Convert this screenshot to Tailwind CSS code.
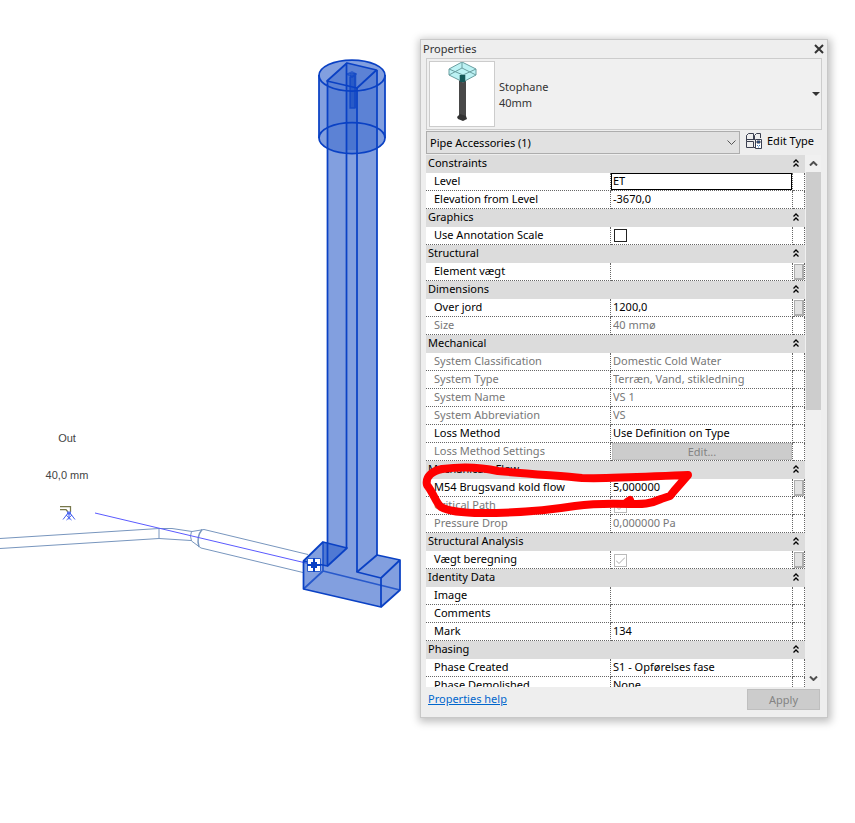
<!DOCTYPE html>
<html lang="en">
<head>
    <meta charset="UTF-8">
    <meta name="viewport" content="width=device-width, initial-scale=1.0">
    <title>Properties</title>
    <script src="https://cdn.jsdelivr.net/npm/@tailwindcss/browser@4"></script>
</head>
<body class="bg-white font-['Noto_Sans',sans-serif] text-[11px] leading-4 text-black">
<main class="flex min-h-screen items-start overflow-hidden">

    <!-- 3D view -->
    <svg class="h-[640px] w-[420px] shrink-0" viewBox="0 0 420 640" fill="none" role="img" aria-label="3D view of pipe accessory">
        <g font-family="Liberation Sans, sans-serif" font-size="11" fill="#444" text-anchor="middle">
            <text x="67" y="442">Out</text>
            <text x="67" y="479">40,0 mm</text>
        </g>

        <!-- Tap symbol -->
        <path d="M60 506.500H70.500V512M60 509.500H66L68 512" stroke="#77774a" stroke-width="1.250"/>
        <path d="M67 511.500h4v3h-4z" fill="#5b74f0"/>
        <path d="M68 513L63 519.500M70 513L75 519.500M69 513V519.500M72 515L66.500 520M66 515L71.500 520" stroke="#4560f0"/>

        <!-- Pipes -->
        <g stroke="#7896be">
            <path d="M0 538.500L159 528.500L172 528.500L192 531.500M0 548.500L159 538.500L191 540.500M159 528V538" />
            <path d="M191.500 531.500Q189.500 536 191.500 541M191.500 541L201 548L303 572.500M192 531.500L204 529.500L308 554.500"/>
            <path d="M202 529.500Q196 537 199 547" stroke-width="1.500"/>
        </g>
        <path d="M95 513L308 563.500" stroke="#5a5aff"/>

        <!-- Column and base -->
        <g fill="#0540c0">
            <path d="M327 154V81L347 63L377 70V555L400 560V590L381 607L303 589V561L323 542L327 543Z" fill-opacity=".5"/>
            <path d="M319 75A33 15 0 0 1 385 75V138A33 15 0 0 1 377 148V70L347 63L327 81V148A33 15 0 0 1 319 138Z" fill-opacity=".5"/>
            <path d="M327 81L347 63L377 70V148A33 15 0 0 1 327 148Z" fill-opacity=".3"/>
            <path d="M323 542L347 548L327 566L323 565Z" fill-opacity=".4"/>
            <path d="M350 73H356V108H350Z" fill-opacity=".5"/>
            <path d="M347 73H357V150H347Z" fill-opacity=".2"/>
        </g>
        <g stroke="#0a41c4" stroke-width="1.750" stroke-linejoin="round">
            <ellipse cx="352" cy="75.500" rx="33" ry="15.500"/>
            <ellipse cx="352" cy="138" rx="33" ry="15.500"/>
            <path d="M319 75V138M385 75V138"/>
            <path d="M347 63L376.500 70L357 88L327 81Z"/>
            <path d="M327.500 81V565M346.500 63V548M357 88V572M377 70V555"/>
            <path d="M347.500 74L352 72L356 74L352 77ZM350 77V108H355V75" stroke-opacity=".6"/>
            <path d="M303.500 561L323 542L347 548L327.500 566L303.500 561V589L381 607V578L357 572L377 555L400 560L381 578M400 560V590L381 607"/>
            <path d="M323 542V571L303.500 589M323 571L400 590" stroke-opacity=".75"/>
        </g>
        <path d="M307.500 558.500H320.500V571.500H307.500Z" fill="#fff" stroke="#2a5ccc"/>
        <path d="M314 558V572M307 565H321" stroke="#0a41c4" stroke-width="2"/>
        <path d="M311 562H317V568H311Z" fill="#0a41c4"/>
    </svg>

    <!-- Properties palette -->
    <aside class="relative mt-[39px] mr-[27px] min-w-0 flex-1 border border-[#c8c8c8] bg-[#eee] shadow-[1px_2px_8px_2px_rgba(0,0,0,0.25)]">
        <header class="flex h-[18px] items-center justify-between pr-[3px] pl-0.5">
            <h1 class="text-[#333]">Properties</h1>
            <button type="button" aria-label="Close">
                <svg class="size-[10px]" viewBox="0 0 10 10" stroke="#333" stroke-width="2"><path d="M1 1L9 9M9 1L1 9"/></svg>
            </button>
        </header>

        <div class="px-[5px]">
            <button type="button" class="flex h-[72px] w-full items-center border border-[#ccc] bg-[#f0f0f0] py-0.5 pl-0.5 text-left text-[#333]">
                <svg class="size-[66px] shrink-0 border border-[#ccc] bg-white" viewBox="0 0 64 64" fill="none">
                    <path d="M29 13H36V54H29Z" fill="#484848"/>
                    <path d="M27 55L30 52L36 54L37 57L33 59L28 57Z" fill="#333"/>
                    <path d="M19 7L32 0L46 7V13L33 20L19 13Z" fill="#a5eef0" fill-opacity=".75" stroke="#6a9ea0"/>
                    <path d="M19 7L33 13L46 7M33 13V20M19 13L32 6L46 13M32 0V6" stroke="#6a9ea0"/>
                    <path d="M30 13H35V20H30Z" fill="#145858"/>
                </svg>
                <span class="ml-1 flex-1 pt-0.5 leading-4">Stophane<br>40mm</span>
                <svg class="mr-px h-1 w-2" viewBox="0 0 8 4"><path d="M0 0H8L4 4Z" fill="#333"/></svg>
            </button>

            <div class="mt-px flex h-6 items-start">
                <div class="relative flex-1">
                    <select aria-label="Category filter" class="block h-[23px] w-full appearance-none border border-[#adadad] bg-[#e1e1e1] pl-[3px]">
                        <option>Pipe Accessories (1)</option>
                    </select>
                    <svg class="pointer-events-none absolute top-[9px] right-1 h-[6px] w-[9px]" viewBox="0 0 9 6" fill="none" stroke="#555"><path d="M.5 .5L4.500 4.500L8.500 .5"/></svg>
                </div>
                <button type="button" class="flex h-5 w-[82px] items-center gap-[5px] pl-1.5">
                    <svg class="size-4 shrink-0" viewBox="0 0 16 16" fill="none" stroke="#3a3f50">
                        <path d="M.5 2.500L2.500 .5H7.500V6.500H.5ZM8.500 2.500L10.500 .5H14.500V5M8.500 2.500V6.500M.5 8.500H7.500V14.500H.5ZM.5 8.500V2.500M7.500 14.500H9M.5 6.500H9"/>
                        <path d="M9.500 6.500H15.500V15.500H9.500Z" fill="#fff"/>
                        <path d="M11 8H14V10H11Z" fill="#1b62b5"/>
                        <path d="M11 12.500H12M13 12.500H14M12 14H13" stroke="#3b7ac0"/>
                    </svg>
                    <span class="whitespace-nowrap">Edit Type</span>
                </button>
            </div>

            <div class="flex h-[532px] overflow-hidden">
                <div class="min-w-0 flex-1">
                    <table class="w-full table-fixed border-separate border-spacing-0 bg-white">
                        <colgroup>
                            <col class="w-[185px]">
                            <col>
                            <col class="w-3">
                        </colgroup>
                        <tbody id="params"></tbody>
                    </table>
                </div>
                <!-- Scroll bar -->
                <div class="flex w-4 flex-col items-center bg-[#f0f0f0] pl-px">
                    <svg class="my-[6px] h-[5px] w-[9px]" viewBox="0 0 9 5" fill="none" stroke="#505050" stroke-width="2"><path d="M1 4.500L4.500 1L8 4.500"/></svg>
                    <div class="h-[238px] w-full bg-[#cdcdcd]"></div>
                    <svg class="mt-auto mb-[6px] h-[5px] w-[9px]" viewBox="0 0 9 5" fill="none" stroke="#505050" stroke-width="2"><path d="M1 .5L4.500 4L8 .5"/></svg>
                </div>
                <div class="w-px"></div>
            </div>
        </div>

        <footer class="flex h-[30px] items-start justify-between px-[7px] pt-0.5">
            <a href="#" class="leading-5 text-[#0066cc] underline">Properties help</a>
            <button type="button" disabled class="h-[21px] w-[73px] border border-[#bfbfbf] bg-[#ccc] text-[#838383]">Apply</button>
        </footer>

        <!-- Marker loop around the flow row -->
        <svg class="pointer-events-none absolute top-[420px] left-0 h-[60px] w-[275px] overflow-visible" viewBox="421 460 275 60" fill="none" stroke="#f00" stroke-width="8" stroke-linejoin="round" stroke-linecap="round">
            <path d="M427 485C425 476 433 471 442 469C458 467 480 467 498 471C530 474 560 476 582 478C615 479 655 476 688 475L674 491L670 496L661 499C648 505 640 504 630 504C605 503 590 504 575 506C550 510 515 513 482 513C462 513 448 511 441 507C436 503 434 494 427 485Z"/>
            <path d="M627 502L630 500"/>
        </svg>
    </aside>
</main>

<script>
    // A string is a group heading, an array is [name, value, kind, has side button]
    const params = [
        'Constraints',
        ['Level', 'ET', 'active'],
        ['Elevation from Level', '-3670,0', 'text'],
        'Graphics',
        ['Use Annotation Scale', false, 'check'],
        'Structural',
        ['Element vægt', '', 'text', true],
        'Dimensions',
        ['Over jord', '1200,0', 'text', true],
        ['Size', '40 mmø', 'readonly'],
        'Mechanical',
        ['System Classification', 'Domestic Cold Water', 'readonly'],
        ['System Type', 'Terræn, Vand, stikledning', 'readonly'],
        ['System Name', 'VS 1', 'readonly'],
        ['System Abbreviation', 'VS', 'readonly'],
        ['Loss Method', 'Use Definition on Type', 'text'],
        ['Loss Method Settings', 'Edit...', 'button'],
        'Mechanical - Flow',
        ['M54 Brugsvand kold flow', '5,000000', 'text', true],
        ['Critical Path', true, 'checkReadonly'],
        ['Pressure Drop', '0,000000 Pa', 'readonly'],
        'Structural Analysis',
        ['Vægt beregning', true, 'checkReadonly', true, 'text-black'],
        'Identity Data',
        ['Image', '', 'text'],
        ['Comments', '', 'text'],
        ['Mark', '134', 'text'],
        'Phasing',
        ['Phase Created', 'S1 - Opførelses fase', 'text'],
        ['Phase Demolished', 'None', 'text']
    ];

    const fields = {
        text: (id, v) => `<input id="${id}" value="${v}" class="block h-[17px] w-full pb-[3px] pl-0.5 leading-[14px] outline-none">`,
        active: (id, v) => `<input id="${id}" value="${v}" class="block h-[17px] w-full border border-black pb-0.5 pl-px leading-[14px] outline outline-black/60 -outline-offset-1">`,
        readonly: (id, v) => `<input id="${id}" value="${v}" disabled class="block h-[17px] w-full pb-[3px] pl-0.5 leading-[14px] text-[#777]">`,
        button: (id, v) => `<button id="${id}" type="button" disabled class="ml-px block h-[17px] w-[calc(100%-1px)] border border-[#bfbfbf] bg-[#ccc] leading-[15px] text-[#838383]">${v}</button>`,
        check: (id) => `<input id="${id}" type="checkbox" class="mt-0.5 ml-[3px] block size-[13px] appearance-none border border-[#222] bg-white">`,
        checkReadonly: (id) => `<span class="relative block h-[17px] pt-[3px] pl-[3px]"><input id="${id}" type="checkbox" checked disabled class="block size-[13px] appearance-none border border-[#bbb] bg-white"><svg class="absolute top-[5px] left-[5px] size-[9px]" viewBox="0 0 9 9" fill="none" stroke="#aaa"><path d="M0 4.500L3 7.500L9 1.500"/></svg></span>`
    };

    const collapse = '<svg class="h-[8px] w-[6px]" viewBox="0 0 6 8" fill="none" stroke="#000" stroke-width="1.250"><path d="M.5 3.500L3 1L5.500 3.500M.5 7.500L3 5L5.500 7.500"/></svg>';

    document.getElementById('params').innerHTML = params.map((p, i) => {
        if (typeof p === 'string') {
            return `<tr><th colspan="3" class="h-[18px] bg-[#dcdcdc] p-0 text-left font-normal"><div class="flex h-[18px] items-center justify-between pr-[6px] pb-0.5 pl-0.5"><span>${p}</span><button type="button" aria-label="Collapse ${p}">${collapse}</button></div></th></tr>`;
        }
        const [name, value, kind, side, color] = p;
        const grey = !color && ['readonly', 'button', 'checkReadonly'].includes(kind);
        const id = 'param' + i;
        return `<tr>
            <td class="h-[18px] border-r border-b border-dotted border-[#666] p-0 pl-2"><label for="${id}" class="block h-[17px] whitespace-nowrap ${grey ? 'text-[#777]' : 'text-black'}">${name}</label></td>
            <td class="h-[18px] border-r border-b border-dotted border-[#666] p-0 align-top">${fields[kind](id, value)}</td>
            <td class="h-[18px] border-r border-b border-dotted border-[#666] p-0">${side ? `<button type="button" aria-label="Associate ${name}" class="ml-px block h-4 w-[10px] border border-r-2 border-b-2 border-[#adadad] bg-[#e1e1e1]"></button>` : ''}</td>
        </tr>`;
    }).join('');
</script>
</body>
</html>
